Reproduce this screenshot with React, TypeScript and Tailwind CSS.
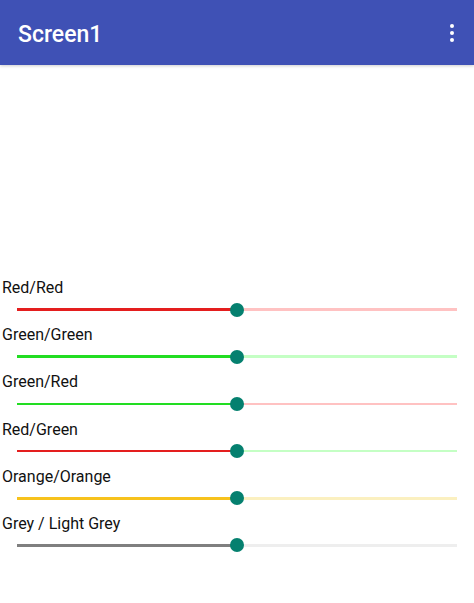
const sliders = [
  { label: 'Red/Red', active: 'bg-[#e41e1e]', inactive: 'bg-[#ffc2c2]' },
  { label: 'Green/Green', active: 'bg-[#22dd22]', inactive: 'bg-[#c4ffc4]' },
  { label: 'Green/Red', active: 'bg-[#22dd22]', inactive: 'bg-[#ffc2c2]' },
  { label: 'Red/Green', active: 'bg-[#e41e1e]', inactive: 'bg-[#c4ffc4]' },
  { label: 'Orange/Orange', active: 'bg-[#f7c21c]', inactive: 'bg-[#fbf0c0]' },
  { label: 'Grey / Light Grey', active: 'bg-[#7f7f7f]', inactive: 'bg-[#eeeeee]' },
];

function Slider({ label, active, inactive }: { label: string; active: string; inactive: string }) {
  return (
    <div className="flex flex-col h-[47.2px]">
      <div className="h-6 leading-[25px] pl-[2px] text-[16px] text-[#111]">{label}</div>
      <div className="relative flex items-center h-[21px] px-[17px]">
        <div className={`h-[2.5px] flex-1 ${active}`} />
        <div className={`h-[2.5px] flex-1 ${inactive}`} />
        <div className="absolute left-1/2 top-1/2 h-[14px] w-[14px] -translate-x-1/2 -translate-y-1/2 rounded-full bg-[#05806f]" />
      </div>
    </div>
  );
}

export default function App() {
  return (
    <div className="min-h-[603px] w-[474px] bg-white font-['Roboto',sans-serif]">
      <header className="flex h-[65px] items-center justify-between bg-[#3f51b5] pl-[18px] pr-[20px] shadow-[0_1px_3px_rgba(0,0,0,0.2)]">
        <h1 className="mt-[6px] text-[23px] font-medium text-white">Screen1</h1>
        <div className="flex flex-col gap-[3px]">
          <span className="h-[4px] w-[4px] rounded-full bg-white" />
          <span className="h-[4px] w-[4px] rounded-full bg-white" />
          <span className="h-[4px] w-[4px] rounded-full bg-white" />
        </div>
      </header>
      <main className="pt-[210px]">
        {sliders.map((s) => (
          <Slider key={s.label} {...s} />
        ))}
      </main>
    </div>
  );
}
